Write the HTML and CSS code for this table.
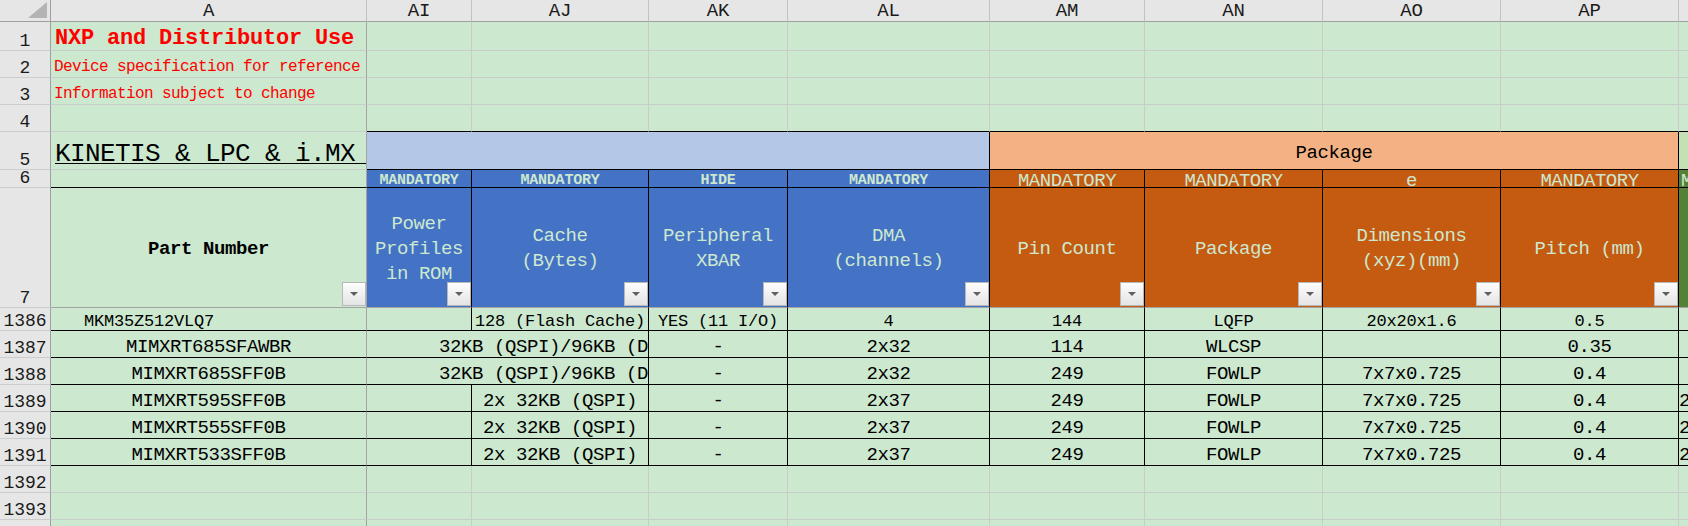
FILE: index.html
```html
<!DOCTYPE html>
<html>
<head>
<meta charset="utf-8">
<link rel="stylesheet" href="styles.css">
</head>
<body>
<div class="sheet">
  <div class="corner"><svg width="19" height="16" viewBox="0 0 19 16"><polygon points="19,0 19,16 0,16" fill="#b4b4b4"/></svg></div>
  <div class="ch">A</div><div class="ch">AI</div><div class="ch">AJ</div><div class="ch">AK</div><div class="ch">AL</div><div class="ch">AM</div><div class="ch">AN</div><div class="ch">AO</div><div class="ch">AP</div><div class="ch"></div>

  <div class="rh">1</div>
  <div class="c fz tl title">NXP and Distributor Use</div>
  <div class="c"></div><div class="c"></div><div class="c"></div><div class="c"></div><div class="c"></div><div class="c"></div><div class="c"></div><div class="c"></div><div class="c"></div>

  <div class="rh">2</div>
  <div class="c fz tl note">Device specification for reference</div>
  <div class="c"></div><div class="c"></div><div class="c"></div><div class="c"></div><div class="c"></div><div class="c"></div><div class="c"></div><div class="c"></div><div class="c"></div>

  <div class="rh">3</div>
  <div class="c fz tl note">Information subject to change</div>
  <div class="c"></div><div class="c"></div><div class="c"></div><div class="c"></div><div class="c"></div><div class="c"></div><div class="c"></div><div class="c"></div><div class="c"></div>

  <div class="rh">4</div>
  <div class="c fz"></div>
  <div class="c kbb"></div><div class="c kbb"></div><div class="c kbb"></div><div class="c kbb"></div><div class="c kbb"></div><div class="c kbb"></div><div class="c kbb"></div><div class="c kbb"></div><div class="c kbb"></div>

  <div class="rh">5</div>
  <div class="c fz tl kin"><span>KINETIS &amp; LPC &amp; i.MX</span></div>
  <div class="c s4 lb kb kbb"></div>
  <div class="c s4 lo kb kbb pkg">Package</div>
  <div class="c lg kbb"></div>

  <div class="rh">6</div>
  <div class="c fz kbb"></div>
  <div class="c db kb kbb man">MANDATORY</div>
  <div class="c db kb kbb man">MANDATORY</div>
  <div class="c db kb kbb man">HIDE</div>
  <div class="c db kb kbb man">MANDATORY</div>
  <div class="c do kb kbb man2">MANDATORY</div>
  <div class="c do kb kbb man2">MANDATORY</div>
  <div class="c do kb kbb man2">e</div>
  <div class="c do kb kbb man2">MANDATORY</div>
  <div class="c dg kbb man2 tl aq">M</div>

  <div class="rh">7</div>
  <div class="c fz fzb hd pn"><span>Part Number</span><i class="dd"></i></div>
  <div class="c db kb fzb hd"><span>Power<br>Profiles<br>in ROM</span><i class="dd"></i></div>
  <div class="c db kb fzb hd"><span>Cache<br>(Bytes)</span><i class="dd"></i></div>
  <div class="c db kb fzb hd"><span>Peripheral<br>XBAR</span><i class="dd"></i></div>
  <div class="c db kb fzb hd"><span>DMA<br>(channels)</span><i class="dd"></i></div>
  <div class="c do kb fzb hd"><span>Pin Count</span><i class="dd"></i></div>
  <div class="c do kb fzb hd"><span>Package</span><i class="dd"></i></div>
  <div class="c do kb fzb hd"><span>Dimensions<br>(xyz)(mm)</span><i class="dd"></i></div>
  <div class="c do kb fzb hd"><span>Pitch (mm)</span><i class="dd"></i></div>
  <div class="c dg fzb"></div>

  <div class="rh">1386</div>
  <div class="c fz kbb sm tl ind">MKM35Z512VLQ7</div>
  <div class="c kb kbb"></div>
  <div class="c kb kbb sm tl p3">128 (Flash Cache)</div>
  <div class="c kb kbb sm">YES (11 I/O)</div>
  <div class="c kb kbb sm">4</div>
  <div class="c kb kbb sm">144</div>
  <div class="c kb kbb sm">LQFP</div>
  <div class="c kb kbb sm">20x20x1.6</div>
  <div class="c kb kbb sm">0.5</div>
  <div class="c kbb"></div>

  <div class="rh">1387</div>
  <div class="c fz kbb">MIMXRT685SFAWBR</div>
  <div class="c s2 kb kbb tr">32KB (QSPI)/96KB (D</div>
  <div class="c kb kbb">-</div>
  <div class="c kb kbb">2x32</div>
  <div class="c kb kbb">114</div>
  <div class="c kb kbb">WLCSP</div>
  <div class="c kb kbb"></div>
  <div class="c kb kbb">0.35</div>
  <div class="c kbb"></div>

  <div class="rh">1388</div>
  <div class="c fz kbb">MIMXRT685SFF0B</div>
  <div class="c s2 kb kbb tr">32KB (QSPI)/96KB (D</div>
  <div class="c kb kbb">-</div>
  <div class="c kb kbb">2x32</div>
  <div class="c kb kbb">249</div>
  <div class="c kb kbb">FOWLP</div>
  <div class="c kb kbb">7x7x0.725</div>
  <div class="c kb kbb">0.4</div>
  <div class="c kbb"></div>

  <div class="rh">1389</div>
  <div class="c fz kbb">MIMXRT595SFF0B</div>
  <div class="c kb kbb"></div>
  <div class="c kb kbb">2x 32KB (QSPI)</div>
  <div class="c kb kbb">-</div>
  <div class="c kb kbb">2x37</div>
  <div class="c kb kbb">249</div>
  <div class="c kb kbb">FOWLP</div>
  <div class="c kb kbb">7x7x0.725</div>
  <div class="c kb kbb">0.4</div>
  <div class="c kbb tl">2</div>

  <div class="rh">1390</div>
  <div class="c fz kbb">MIMXRT555SFF0B</div>
  <div class="c kb kbb"></div>
  <div class="c kb kbb">2x 32KB (QSPI)</div>
  <div class="c kb kbb">-</div>
  <div class="c kb kbb">2x37</div>
  <div class="c kb kbb">249</div>
  <div class="c kb kbb">FOWLP</div>
  <div class="c kb kbb">7x7x0.725</div>
  <div class="c kb kbb">0.4</div>
  <div class="c kbb tl">2</div>

  <div class="rh">1391</div>
  <div class="c fz kbb">MIMXRT533SFF0B</div>
  <div class="c kb kbb"></div>
  <div class="c kb kbb">2x 32KB (QSPI)</div>
  <div class="c kb kbb">-</div>
  <div class="c kb kbb">2x37</div>
  <div class="c kb kbb">249</div>
  <div class="c kb kbb">FOWLP</div>
  <div class="c kb kbb">7x7x0.725</div>
  <div class="c kb kbb">0.4</div>
  <div class="c kbb tl">2</div>

  <div class="rh">1392</div>
  <div class="c fz"></div>
  <div class="c"></div><div class="c"></div><div class="c"></div><div class="c"></div><div class="c"></div><div class="c"></div><div class="c"></div><div class="c"></div><div class="c"></div>

  <div class="rh">1393</div>
  <div class="c fz"></div>
  <div class="c"></div><div class="c"></div><div class="c"></div><div class="c"></div><div class="c"></div><div class="c"></div><div class="c"></div><div class="c"></div><div class="c"></div>

  <div class="rh"></div>
  <div class="c fz"></div>
  <div class="c"></div><div class="c"></div><div class="c"></div><div class="c"></div><div class="c"></div><div class="c"></div><div class="c"></div><div class="c"></div><div class="c"></div>
</div>
</body>
</html>
```

FILE: styles.css
```css
* { box-sizing: border-box; }
html, body { margin: 0; padding: 0; }
body {
  width: 1688px;
  height: 526px;
  overflow: hidden;
  background: #cce8cf;
  font-family: "Liberation Mono", "DejaVu Sans Mono", monospace;
  color: #000;
}
.sheet {
  display: grid;
  width: 1739px;
  grid-template-columns: 51px 316px 105px 177px 139px 202px 155px 178px 178px 178px 60px;
  grid-template-rows: 22px 29px 27px 27px 27px 38px 18px 120px 23px repeat(8, 27px);
}
.corner {
  background: #e6e6e6;
  border-right: 1px solid #9f9f9f;
  border-bottom: 1px solid #9f9f9f;
  display: flex;
  justify-content: flex-end;
  align-items: flex-start;
  padding: 2px 3px 0 0;
}
.ch {
  background: #e6e6e6;
  border-right: 1px solid #c2c2c2;
  border-bottom: 1px solid #9f9f9f;
  display: flex;
  justify-content: center;
  align-items: center;
  padding-top: 2px;
  font-size: 19px;
  letter-spacing: -0.2px;
  line-height: 1;
  color: #1a1a1a;
  overflow: hidden;
}
.rh {
  background: #e6e6e6;
  border-right: 1px solid #9f9f9f;
  border-bottom: 1px solid #cdcdcd;
  display: flex;
  justify-content: center;
  align-items: flex-end;
  font-size: 18px;
  line-height: 1;
  color: #1a1a1a;
}
.c {
  background: #cce8cf;
  border-right: 1px solid #c9cdca;
  border-bottom: 1px solid #c9cdca;
  display: flex;
  justify-content: center;
  align-items: flex-end;
  overflow: hidden;
  white-space: nowrap;
  font-size: 19px;
  letter-spacing: -0.4px;
  line-height: 1;
}
.fz { border-right-color: #a3a3a3; }
.fzb { border-bottom-color: #a3a3a3; }
.kb { border-right-color: #000; }
.kbb { border-bottom-color: #000; }
.s2 { grid-column: span 2; }
.s4 { grid-column: span 4; }
.tl { justify-content: flex-start; }
.tr { justify-content: flex-end; }
.lb { background: #b4c7e7; }
.db { background: #4472c4; }
.lo { background: #f4b183; }
.do { background: #c55a11; }
.lg { background: #c5e0b4; }
.dg { background: #548235; }

.title {
  color: #ff0000;
  font-weight: bold;
  font-size: 22px;
  letter-spacing: -0.2px;
  line-height: 0.95;
  padding-left: 4px;
}
.note {
  color: #ff0000;
  font-size: 16px;
  letter-spacing: -0.6px;
  padding-left: 3px;
  padding-bottom: 2px;
}
.kin {
  font-size: 26px;
  letter-spacing: -0.6px;
  padding-left: 4px;
  padding-bottom: 5px;
  overflow: visible;
}
.kin span {
  flex: 1;
  line-height: 18px;
  border-bottom: 1px solid #000;
}
.pkg {
  align-items: center;
  padding-top: 5px;
}
.man {
  color: #cce8cf;
  font-weight: bold;
  font-size: 15px;
  letter-spacing: -0.2px;
  line-height: 12px;
}
.man2 {
  color: #cce8cf;
  font-size: 19px;
  letter-spacing: -0.5px;
  line-height: 11px;
}
.aq { padding-left: 2px; }
.hd {
  position: relative;
  align-items: center;
  text-align: center;
  line-height: 25px;
  padding-top: 3px;
  color: #cce8cf;
}
.pn { color: #000; font-weight: bold; }
.dd {
  position: absolute;
  right: 0;
  bottom: 1px;
  width: 24px;
  height: 24px;
  border: 1px solid #b8b8b8;
  background: linear-gradient(#fdfdfd, #e4e4e4);
  display: flex;
  align-items: center;
  justify-content: center;
}
.dd::after {
  content: "";
  border-left: 4.5px solid transparent;
  border-right: 4.5px solid transparent;
  border-top: 4px solid #606060;
}
.sm { font-size: 17px; letter-spacing: -0.2px; }
.ind { padding-left: 33px; }
.p3 { padding-left: 3px; }
```
